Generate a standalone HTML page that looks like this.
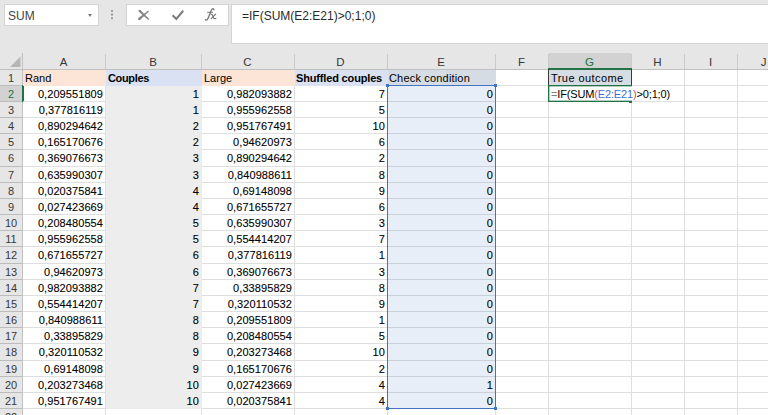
<!DOCTYPE html><html><head><meta charset="utf-8"><style>
*{margin:0;padding:0;box-sizing:border-box}
html,body{width:768px;height:415px;overflow:hidden;background:#e6e6e6;font-family:"Liberation Sans",sans-serif;}
.a{position:absolute}
.t{position:absolute;white-space:nowrap;font-size:11px;line-height:16px;color:#000}
.n{letter-spacing:0.08px;-webkit-text-stroke:0.1px #000}
.r{text-align:right}
.hl{position:absolute;height:1px}
.vl{position:absolute;width:1px}
</style></head><body>
<div class="a" style="left:4px;top:4px;width:95px;height:22px;background:#fff;border:1px solid #d4d4d4"></div>
<div class="t" style="left:8px;top:8px;font-size:12px;color:#444">SUM</div>
<div class="a" style="left:88px;top:14px;width:0;height:0;border-left:2.5px solid transparent;border-right:2.5px solid transparent;border-top:3px solid #777"></div>
<svg class="a" style="left:108px;top:6px" width="8" height="16" viewBox="0 0 8 16"><g fill="#a0a0a0"><rect x="3" y="3.9" width="2" height="2"/><rect x="3" y="7.6" width="2" height="2"/><rect x="3" y="11.2" width="2" height="2"/></g></svg>
<div class="a" style="left:126px;top:4px;width:103px;height:22px;background:#fff;border:1px solid #d4d4d4"></div>
<svg class="a" style="left:134px;top:6px" width="22" height="18" viewBox="0 0 22 18"><g fill="#858585"><path d="M4.81 5.64 L14.42 13.90 L15.18 13.10 L6.39 3.96 Z"/><circle cx="5.6" cy="4.8" r="1.15"/><path d="M14.28 4.62 L4.45 12.12 L5.95 13.88 L14.92 5.38 Z"/><circle cx="5.2" cy="13.0" r="1.15"/></g></svg>
<svg class="a" style="left:171px;top:9px" width="14" height="12" viewBox="0 0 14 12"><path d="M1.6 6.3 L5.3 10 L12.2 1.8" stroke="#7c7c7c" stroke-width="2.1" fill="none"/></svg>
<svg class="a" style="left:200px;top:4px" width="22" height="22" viewBox="0 0 22 22"><g fill="none" stroke="#747474" stroke-linecap="round"><path d="M14.0 5.7 Q13.4 4.6 12.5 4.8 Q11.7 5.0 11.2 6.4 L8.1 14.2 Q7.4 16.2 6.4 16.2 Q5.7 16.1 5.4 15.6" stroke-width="1.3"/><path d="M7.6 8.3 L12.6 8.3" stroke-width="1.1"/><path d="M11.1 10.4 Q12.0 9.9 12.6 11.4 L13.7 14.0 Q14.2 15.0 15.9 14.5" stroke-width="1.2"/><path d="M15.7 10.1 L11.1 14.8" stroke-width="1.1"/></g></svg>
<div class="a" style="left:231px;top:4px;width:600px;height:40px;background:#fff;border:1px solid #d4d4d4"></div>
<div class="t" style="left:242px;top:7.6px;font-size:12px;color:#2a2a2a">=IF(SUM(E2:E21)&gt;0;1;0)</div>
<div class="vl" style="left:22px;top:54px;height:15px;background:#cbcbcb"></div>
<div class="vl" style="left:105px;top:54px;height:15px;background:#cbcbcb"></div>
<div class="vl" style="left:201px;top:54px;height:15px;background:#cbcbcb"></div>
<div class="vl" style="left:294px;top:54px;height:15px;background:#cbcbcb"></div>
<div class="vl" style="left:387px;top:54px;height:15px;background:#cbcbcb"></div>
<div class="vl" style="left:495px;top:54px;height:15px;background:#cbcbcb"></div>
<div class="vl" style="left:548px;top:54px;height:15px;background:#cbcbcb"></div>
<div class="vl" style="left:631px;top:54px;height:15px;background:#cbcbcb"></div>
<div class="vl" style="left:684px;top:54px;height:15px;background:#cbcbcb"></div>
<div class="vl" style="left:737px;top:54px;height:15px;background:#cbcbcb"></div>
<div class="vl" style="left:790px;top:54px;height:15px;background:#cbcbcb"></div>
<div class="hl" style="left:0;top:69px;width:768px;background:#c0c0c0"></div>
<div class="a" style="left:549px;top:53px;width:82px;height:16px;background:#d2d2d2"></div>
<div class="hl" style="left:548px;top:68px;width:84px;height:2px;background:#217346"></div>
<svg class="a" style="left:0;top:53px" width="22" height="16"><path d="M10 14 L20.5 14 L20.5 3.5 Z" fill="#b6b6b6"/></svg>
<div class="t" style="left:22px;width:83px;top:54px;text-align:center;font-size:11.5px;color:#383838">A</div>
<div class="t" style="left:105px;width:96px;top:54px;text-align:center;font-size:11.5px;color:#383838">B</div>
<div class="t" style="left:201px;width:93px;top:54px;text-align:center;font-size:11.5px;color:#383838">C</div>
<div class="t" style="left:294px;width:93px;top:54px;text-align:center;font-size:11.5px;color:#383838">D</div>
<div class="t" style="left:387px;width:108px;top:54px;text-align:center;font-size:11.5px;color:#383838">E</div>
<div class="t" style="left:495px;width:53px;top:54px;text-align:center;font-size:11.5px;color:#383838">F</div>
<div class="t" style="left:548px;width:83px;top:54px;text-align:center;font-size:11.5px;color:#217346">G</div>
<div class="t" style="left:631px;width:53px;top:54px;text-align:center;font-size:11.5px;color:#383838">H</div>
<div class="t" style="left:684px;width:53px;top:54px;text-align:center;font-size:11.5px;color:#383838">I</div>
<div class="t" style="left:737px;width:53px;top:54px;text-align:center;font-size:11.5px;color:#383838">J</div>
<div class="a" style="left:23px;top:70px;width:746px;height:345px;background:#fff"></div>
<div class="t" style="left:0;width:22px;top:69.50px;text-align:center;font-size:11px;color:#383838">1</div>
<div class="hl" style="left:0;top:85.00px;width:22px;background:#bcbcbc"></div>
<div class="a" style="left:0;top:86px;width:22px;height:15px;background:#d2d2d2"></div>
<div class="t" style="left:0;width:22px;top:85.50px;text-align:center;font-size:11px;color:#217346">2</div>
<div class="hl" style="left:0;top:101.00px;width:22px;background:#bcbcbc"></div>
<div class="t" style="left:0;width:22px;top:101.50px;text-align:center;font-size:11px;color:#383838">3</div>
<div class="hl" style="left:0;top:117.00px;width:22px;background:#bcbcbc"></div>
<div class="t" style="left:0;width:22px;top:117.50px;text-align:center;font-size:11px;color:#383838">4</div>
<div class="hl" style="left:0;top:133.00px;width:22px;background:#bcbcbc"></div>
<div class="t" style="left:0;width:22px;top:133.50px;text-align:center;font-size:11px;color:#383838">5</div>
<div class="hl" style="left:0;top:149.00px;width:22px;background:#bcbcbc"></div>
<div class="t" style="left:0;width:22px;top:149.50px;text-align:center;font-size:11px;color:#383838">6</div>
<div class="hl" style="left:0;top:166.00px;width:22px;background:#bcbcbc"></div>
<div class="t" style="left:0;width:22px;top:166.50px;text-align:center;font-size:11px;color:#383838">7</div>
<div class="hl" style="left:0;top:182.00px;width:22px;background:#bcbcbc"></div>
<div class="t" style="left:0;width:22px;top:182.50px;text-align:center;font-size:11px;color:#383838">8</div>
<div class="hl" style="left:0;top:198.00px;width:22px;background:#bcbcbc"></div>
<div class="t" style="left:0;width:22px;top:198.50px;text-align:center;font-size:11px;color:#383838">9</div>
<div class="hl" style="left:0;top:214.00px;width:22px;background:#bcbcbc"></div>
<div class="t" style="left:0;width:22px;top:214.50px;text-align:center;font-size:11px;color:#383838">10</div>
<div class="hl" style="left:0;top:230.00px;width:22px;background:#bcbcbc"></div>
<div class="t" style="left:0;width:22px;top:230.50px;text-align:center;font-size:11px;color:#383838">11</div>
<div class="hl" style="left:0;top:246.00px;width:22px;background:#bcbcbc"></div>
<div class="t" style="left:0;width:22px;top:246.50px;text-align:center;font-size:11px;color:#383838">12</div>
<div class="hl" style="left:0;top:263.00px;width:22px;background:#bcbcbc"></div>
<div class="t" style="left:0;width:22px;top:263.50px;text-align:center;font-size:11px;color:#383838">13</div>
<div class="hl" style="left:0;top:279.00px;width:22px;background:#bcbcbc"></div>
<div class="t" style="left:0;width:22px;top:279.50px;text-align:center;font-size:11px;color:#383838">14</div>
<div class="hl" style="left:0;top:295.00px;width:22px;background:#bcbcbc"></div>
<div class="t" style="left:0;width:22px;top:295.50px;text-align:center;font-size:11px;color:#383838">15</div>
<div class="hl" style="left:0;top:311.00px;width:22px;background:#bcbcbc"></div>
<div class="t" style="left:0;width:22px;top:311.50px;text-align:center;font-size:11px;color:#383838">16</div>
<div class="hl" style="left:0;top:327.00px;width:22px;background:#bcbcbc"></div>
<div class="t" style="left:0;width:22px;top:327.50px;text-align:center;font-size:11px;color:#383838">17</div>
<div class="hl" style="left:0;top:343.00px;width:22px;background:#bcbcbc"></div>
<div class="t" style="left:0;width:22px;top:343.50px;text-align:center;font-size:11px;color:#383838">18</div>
<div class="hl" style="left:0;top:360.00px;width:22px;background:#bcbcbc"></div>
<div class="t" style="left:0;width:22px;top:360.50px;text-align:center;font-size:11px;color:#383838">19</div>
<div class="hl" style="left:0;top:376.00px;width:22px;background:#bcbcbc"></div>
<div class="t" style="left:0;width:22px;top:376.50px;text-align:center;font-size:11px;color:#383838">20</div>
<div class="hl" style="left:0;top:392.00px;width:22px;background:#bcbcbc"></div>
<div class="t" style="left:0;width:22px;top:392.50px;text-align:center;font-size:11px;color:#383838">21</div>
<div class="hl" style="left:0;top:408.00px;width:22px;background:#bcbcbc"></div>
<div class="t" style="left:0;width:22px;top:408.50px;text-align:center;font-size:11px;color:#383838">22</div>
<div class="hl" style="left:0;top:424.00px;width:22px;background:#bcbcbc"></div>
<div class="vl" style="left:22px;top:53px;height:362px;background:#c2c2c2"></div>
<div class="vl" style="left:22px;top:85px;height:17px;width:2px;background:#217346"></div>
<div class="hl" style="left:23px;top:85px;width:746px;background:#dfdfdf"></div>
<div class="hl" style="left:23px;top:101px;width:746px;background:#dfdfdf"></div>
<div class="hl" style="left:23px;top:117px;width:746px;background:#dfdfdf"></div>
<div class="hl" style="left:23px;top:133px;width:746px;background:#dfdfdf"></div>
<div class="hl" style="left:23px;top:149px;width:746px;background:#dfdfdf"></div>
<div class="hl" style="left:23px;top:166px;width:746px;background:#dfdfdf"></div>
<div class="hl" style="left:23px;top:182px;width:746px;background:#dfdfdf"></div>
<div class="hl" style="left:23px;top:198px;width:746px;background:#dfdfdf"></div>
<div class="hl" style="left:23px;top:214px;width:746px;background:#dfdfdf"></div>
<div class="hl" style="left:23px;top:230px;width:746px;background:#dfdfdf"></div>
<div class="hl" style="left:23px;top:246px;width:746px;background:#dfdfdf"></div>
<div class="hl" style="left:23px;top:263px;width:746px;background:#dfdfdf"></div>
<div class="hl" style="left:23px;top:279px;width:746px;background:#dfdfdf"></div>
<div class="hl" style="left:23px;top:295px;width:746px;background:#dfdfdf"></div>
<div class="hl" style="left:23px;top:311px;width:746px;background:#dfdfdf"></div>
<div class="hl" style="left:23px;top:327px;width:746px;background:#dfdfdf"></div>
<div class="hl" style="left:23px;top:343px;width:746px;background:#dfdfdf"></div>
<div class="hl" style="left:23px;top:360px;width:746px;background:#dfdfdf"></div>
<div class="hl" style="left:23px;top:376px;width:746px;background:#dfdfdf"></div>
<div class="hl" style="left:23px;top:392px;width:746px;background:#dfdfdf"></div>
<div class="hl" style="left:23px;top:408px;width:746px;background:#dfdfdf"></div>
<div class="hl" style="left:23px;top:424px;width:746px;background:#dfdfdf"></div>
<div class="vl" style="left:105px;top:70px;height:345px;background:#dfdfdf"></div>
<div class="vl" style="left:201px;top:70px;height:345px;background:#dfdfdf"></div>
<div class="vl" style="left:294px;top:70px;height:345px;background:#dfdfdf"></div>
<div class="vl" style="left:387px;top:70px;height:345px;background:#dfdfdf"></div>
<div class="vl" style="left:495px;top:70px;height:345px;background:#dfdfdf"></div>
<div class="vl" style="left:548px;top:70px;height:345px;background:#dfdfdf"></div>
<div class="vl" style="left:631px;top:70px;height:345px;background:#dfdfdf"></div>
<div class="vl" style="left:684px;top:70px;height:345px;background:#dfdfdf"></div>
<div class="vl" style="left:737px;top:70px;height:345px;background:#dfdfdf"></div>
<div class="vl" style="left:790px;top:70px;height:345px;background:#dfdfdf"></div>
<div class="a" style="left:23px;top:70px;width:83px;height:16px;background:#fce4d6"></div>
<div class="a" style="left:106px;top:70px;width:96px;height:16px;background:#d9e1f2"></div>
<div class="a" style="left:202px;top:70px;width:93px;height:16px;background:#fce4d6"></div>
<div class="a" style="left:295px;top:70px;width:93px;height:16px;background:#d9e1f2"></div>
<div class="a" style="left:388px;top:70px;width:108px;height:16px;background:#d6dce4"></div>
<div class="a" style="left:549px;top:70px;width:82px;height:16px;background:#d6dce4"></div>
<div class="a" style="left:106px;top:86px;width:96px;height:323px;background:#ededed"></div>
<div class="vl" style="left:548px;top:69px;height:17px;background:#3a3a3a"></div>
<div class="vl" style="left:631px;top:69px;height:17px;background:#3a3a3a"></div>
<div class="a" style="left:387px;top:85px;width:109px;height:324px;background:rgba(68,114,196,0.12);border:1px solid #4472c4"></div>
<div class="a" style="left:386px;top:84px;width:3px;height:3px;background:#4472c4"></div>
<div class="a" style="left:494px;top:84px;width:3px;height:3px;background:#4472c4"></div>
<div class="a" style="left:386px;top:407px;width:3px;height:3px;background:#4472c4"></div>
<div class="a" style="left:494px;top:407px;width:3px;height:3px;background:#4472c4"></div>
<div class="a" style="left:549px;top:86px;width:135px;height:15px;background:#fff"></div>
<div class="a" style="left:548px;top:85px;width:84px;height:1px;background:#217346"></div>
<div class="a" style="left:549px;top:86px;width:83px;height:1px;background:rgba(33,115,70,0.35)"></div>
<div class="a" style="left:548px;top:101px;width:84px;height:1px;background:#217346"></div>
<div class="a" style="left:549px;top:100px;width:83px;height:1px;background:rgba(33,115,70,0.35)"></div>
<div class="a" style="left:548px;top:85px;width:1px;height:17px;background:#217346"></div>
<div class="a" style="left:549px;top:86px;width:1px;height:15px;background:rgba(33,115,70,0.35)"></div>
<div class="a" style="left:629px;top:101px;width:3px;height:2px;background:#217346"></div>
<div class="t" style="top:69.50px;left:25px;">Rand</div>
<div class="t" style="top:69.50px;left:108px;font-weight:bold;letter-spacing:-0.35px">Couples</div>
<div class="t" style="top:69.50px;left:204px;">Large</div>
<div class="t" style="top:69.50px;left:297px;font-weight:bold;letter-spacing:-0.16px;margin-left:-1px">Shuffled couples</div>
<div class="t" style="top:69.50px;left:390px;letter-spacing:0.18px;margin-left:-1px">Check condition</div>
<div class="t" style="top:69.50px;left:551px;letter-spacing:0.43px">True outcome</div>
<div class="t n" style="top:85.50px;left:22px;width:81px;text-align:right;">0,209551809</div>
<div class="t n" style="top:85.50px;left:105px;width:94px;text-align:right;">1</div>
<div class="t n" style="top:85.50px;left:201px;width:91px;text-align:right;">0,982093882</div>
<div class="t n" style="top:85.50px;left:294px;width:91px;text-align:right;">7</div>
<div class="t n" style="top:85.50px;left:387px;width:106px;text-align:right;">0</div>
<div class="t n" style="top:101.50px;left:22px;width:81px;text-align:right;">0,377816119</div>
<div class="t n" style="top:101.50px;left:105px;width:94px;text-align:right;">1</div>
<div class="t n" style="top:101.50px;left:201px;width:91px;text-align:right;">0,955962558</div>
<div class="t n" style="top:101.50px;left:294px;width:91px;text-align:right;">5</div>
<div class="t n" style="top:101.50px;left:387px;width:106px;text-align:right;">0</div>
<div class="t n" style="top:117.50px;left:22px;width:81px;text-align:right;">0,890294642</div>
<div class="t n" style="top:117.50px;left:105px;width:94px;text-align:right;">2</div>
<div class="t n" style="top:117.50px;left:201px;width:91px;text-align:right;">0,951767491</div>
<div class="t n" style="top:117.50px;left:294px;width:91px;text-align:right;">10</div>
<div class="t n" style="top:117.50px;left:387px;width:106px;text-align:right;">0</div>
<div class="t n" style="top:133.50px;left:22px;width:81px;text-align:right;">0,165170676</div>
<div class="t n" style="top:133.50px;left:105px;width:94px;text-align:right;">2</div>
<div class="t n" style="top:133.50px;left:201px;width:91px;text-align:right;">0,94620973</div>
<div class="t n" style="top:133.50px;left:294px;width:91px;text-align:right;">6</div>
<div class="t n" style="top:133.50px;left:387px;width:106px;text-align:right;">0</div>
<div class="t n" style="top:149.50px;left:22px;width:81px;text-align:right;">0,369076673</div>
<div class="t n" style="top:149.50px;left:105px;width:94px;text-align:right;">3</div>
<div class="t n" style="top:149.50px;left:201px;width:91px;text-align:right;">0,890294642</div>
<div class="t n" style="top:149.50px;left:294px;width:91px;text-align:right;">2</div>
<div class="t n" style="top:149.50px;left:387px;width:106px;text-align:right;">0</div>
<div class="t n" style="top:166.50px;left:22px;width:81px;text-align:right;">0,635990307</div>
<div class="t n" style="top:166.50px;left:105px;width:94px;text-align:right;">3</div>
<div class="t n" style="top:166.50px;left:201px;width:91px;text-align:right;">0,840988611</div>
<div class="t n" style="top:166.50px;left:294px;width:91px;text-align:right;">8</div>
<div class="t n" style="top:166.50px;left:387px;width:106px;text-align:right;">0</div>
<div class="t n" style="top:182.50px;left:22px;width:81px;text-align:right;">0,020375841</div>
<div class="t n" style="top:182.50px;left:105px;width:94px;text-align:right;">4</div>
<div class="t n" style="top:182.50px;left:201px;width:91px;text-align:right;">0,69148098</div>
<div class="t n" style="top:182.50px;left:294px;width:91px;text-align:right;">9</div>
<div class="t n" style="top:182.50px;left:387px;width:106px;text-align:right;">0</div>
<div class="t n" style="top:198.50px;left:22px;width:81px;text-align:right;">0,027423669</div>
<div class="t n" style="top:198.50px;left:105px;width:94px;text-align:right;">4</div>
<div class="t n" style="top:198.50px;left:201px;width:91px;text-align:right;">0,671655727</div>
<div class="t n" style="top:198.50px;left:294px;width:91px;text-align:right;">6</div>
<div class="t n" style="top:198.50px;left:387px;width:106px;text-align:right;">0</div>
<div class="t n" style="top:214.50px;left:22px;width:81px;text-align:right;">0,208480554</div>
<div class="t n" style="top:214.50px;left:105px;width:94px;text-align:right;">5</div>
<div class="t n" style="top:214.50px;left:201px;width:91px;text-align:right;">0,635990307</div>
<div class="t n" style="top:214.50px;left:294px;width:91px;text-align:right;">3</div>
<div class="t n" style="top:214.50px;left:387px;width:106px;text-align:right;">0</div>
<div class="t n" style="top:230.50px;left:22px;width:81px;text-align:right;">0,955962558</div>
<div class="t n" style="top:230.50px;left:105px;width:94px;text-align:right;">5</div>
<div class="t n" style="top:230.50px;left:201px;width:91px;text-align:right;">0,554414207</div>
<div class="t n" style="top:230.50px;left:294px;width:91px;text-align:right;">7</div>
<div class="t n" style="top:230.50px;left:387px;width:106px;text-align:right;">0</div>
<div class="t n" style="top:246.50px;left:22px;width:81px;text-align:right;">0,671655727</div>
<div class="t n" style="top:246.50px;left:105px;width:94px;text-align:right;">6</div>
<div class="t n" style="top:246.50px;left:201px;width:91px;text-align:right;">0,377816119</div>
<div class="t n" style="top:246.50px;left:294px;width:91px;text-align:right;">1</div>
<div class="t n" style="top:246.50px;left:387px;width:106px;text-align:right;">0</div>
<div class="t n" style="top:263.50px;left:22px;width:81px;text-align:right;">0,94620973</div>
<div class="t n" style="top:263.50px;left:105px;width:94px;text-align:right;">6</div>
<div class="t n" style="top:263.50px;left:201px;width:91px;text-align:right;">0,369076673</div>
<div class="t n" style="top:263.50px;left:294px;width:91px;text-align:right;">3</div>
<div class="t n" style="top:263.50px;left:387px;width:106px;text-align:right;">0</div>
<div class="t n" style="top:279.50px;left:22px;width:81px;text-align:right;">0,982093882</div>
<div class="t n" style="top:279.50px;left:105px;width:94px;text-align:right;">7</div>
<div class="t n" style="top:279.50px;left:201px;width:91px;text-align:right;">0,33895829</div>
<div class="t n" style="top:279.50px;left:294px;width:91px;text-align:right;">8</div>
<div class="t n" style="top:279.50px;left:387px;width:106px;text-align:right;">0</div>
<div class="t n" style="top:295.50px;left:22px;width:81px;text-align:right;">0,554414207</div>
<div class="t n" style="top:295.50px;left:105px;width:94px;text-align:right;">7</div>
<div class="t n" style="top:295.50px;left:201px;width:91px;text-align:right;">0,320110532</div>
<div class="t n" style="top:295.50px;left:294px;width:91px;text-align:right;">9</div>
<div class="t n" style="top:295.50px;left:387px;width:106px;text-align:right;">0</div>
<div class="t n" style="top:311.50px;left:22px;width:81px;text-align:right;">0,840988611</div>
<div class="t n" style="top:311.50px;left:105px;width:94px;text-align:right;">8</div>
<div class="t n" style="top:311.50px;left:201px;width:91px;text-align:right;">0,209551809</div>
<div class="t n" style="top:311.50px;left:294px;width:91px;text-align:right;">1</div>
<div class="t n" style="top:311.50px;left:387px;width:106px;text-align:right;">0</div>
<div class="t n" style="top:327.50px;left:22px;width:81px;text-align:right;">0,33895829</div>
<div class="t n" style="top:327.50px;left:105px;width:94px;text-align:right;">8</div>
<div class="t n" style="top:327.50px;left:201px;width:91px;text-align:right;">0,208480554</div>
<div class="t n" style="top:327.50px;left:294px;width:91px;text-align:right;">5</div>
<div class="t n" style="top:327.50px;left:387px;width:106px;text-align:right;">0</div>
<div class="t n" style="top:343.50px;left:22px;width:81px;text-align:right;">0,320110532</div>
<div class="t n" style="top:343.50px;left:105px;width:94px;text-align:right;">9</div>
<div class="t n" style="top:343.50px;left:201px;width:91px;text-align:right;">0,203273468</div>
<div class="t n" style="top:343.50px;left:294px;width:91px;text-align:right;">10</div>
<div class="t n" style="top:343.50px;left:387px;width:106px;text-align:right;">0</div>
<div class="t n" style="top:360.50px;left:22px;width:81px;text-align:right;">0,69148098</div>
<div class="t n" style="top:360.50px;left:105px;width:94px;text-align:right;">9</div>
<div class="t n" style="top:360.50px;left:201px;width:91px;text-align:right;">0,165170676</div>
<div class="t n" style="top:360.50px;left:294px;width:91px;text-align:right;">2</div>
<div class="t n" style="top:360.50px;left:387px;width:106px;text-align:right;">0</div>
<div class="t n" style="top:376.50px;left:22px;width:81px;text-align:right;">0,203273468</div>
<div class="t n" style="top:376.50px;left:105px;width:94px;text-align:right;">10</div>
<div class="t n" style="top:376.50px;left:201px;width:91px;text-align:right;">0,027423669</div>
<div class="t n" style="top:376.50px;left:294px;width:91px;text-align:right;">4</div>
<div class="t n" style="top:376.50px;left:387px;width:106px;text-align:right;">1</div>
<div class="t n" style="top:392.50px;left:22px;width:81px;text-align:right;">0,951767491</div>
<div class="t n" style="top:392.50px;left:105px;width:94px;text-align:right;">10</div>
<div class="t n" style="top:392.50px;left:201px;width:91px;text-align:right;">0,020375841</div>
<div class="t n" style="top:392.50px;left:294px;width:91px;text-align:right;">4</div>
<div class="t n" style="top:392.50px;left:387px;width:106px;text-align:right;">0</div>
<div class="t" style="top:85.50px;left:551px;letter-spacing:-0.15px"><span style="color:#808080">=</span>IF(SUM<span style="color:#dc4b4b">(</span><span style="color:#3d6fcf">E2:E21</span><span style="color:#dc4b4b">)</span>&gt;0;1;0)</div>
</body></html>
